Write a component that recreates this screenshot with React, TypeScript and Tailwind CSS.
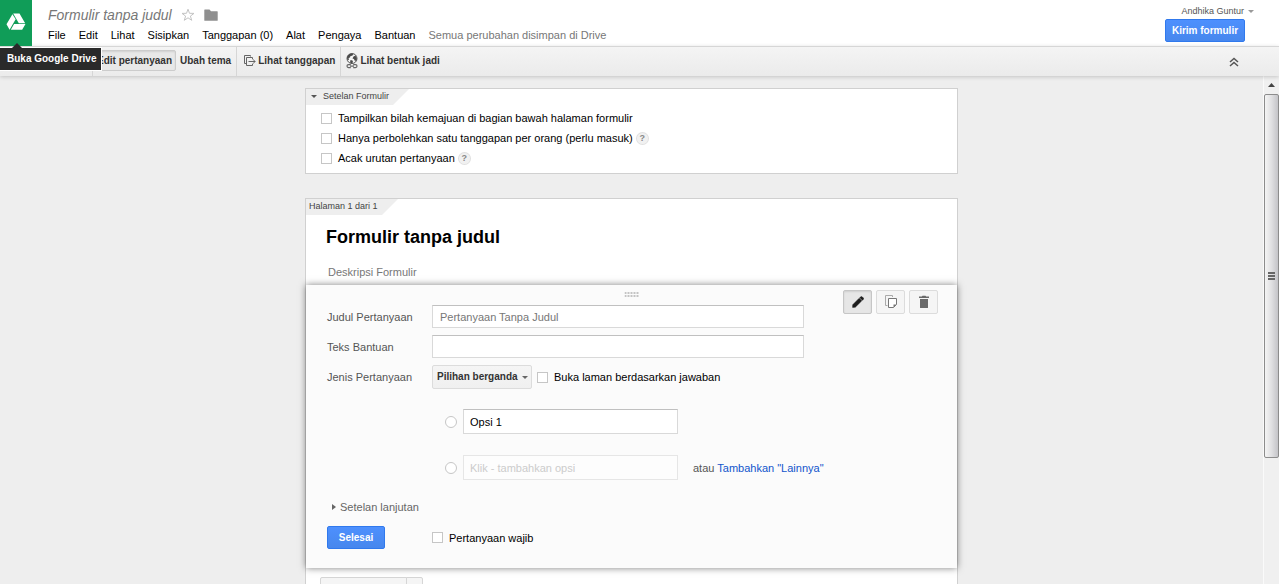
import type { ReactNode } from "react";
import clsx from "clsx";

const MENUS = ["File", "Edit", "Lihat", "Sisipkan", "Tanggapan (0)", "Alat", "Pengaya", "Bantuan"];

const SETTINGS = [
  { id: "progress", label: "Tampilkan bilah kemajuan di bagian bawah halaman formulir", help: false },
  { id: "single", label: "Hanya perbolehkan satu tanggapan per orang (perlu masuk)", help: true },
  { id: "shuffle", label: "Acak urutan pertanyaan", help: true },
];

function DriveLogo() {
  return (
    <svg viewBox="0 0 24 24" className="h-5 w-5 fill-white" aria-hidden>
      <path d="M7.700 2.600.6 14.800l3.700 6.600 7.300-12.600zM9.700 14.500l-3.900 6.900h13.600l4-6.900zM23 13.500 16.200 1.800H8.600l6.800 11.700z" />
    </svg>
  );
}

function StarIcon() {
  return (
    <svg viewBox="0 0 14 14" className="h-3.5 w-3.5 fill-none stroke-[#c4c4c4]" aria-hidden>
      <path d="m7 1.200 1.500 4.100 4.500.1-3.600 2.700 1.300 4.200L7 9.800l-3.700 2.500 1.300-4.200L1 5.400l4.500-.1z" />
    </svg>
  );
}

function FolderIcon() {
  return (
    <svg viewBox="0 0 14 12" className="h-3 w-3.5 fill-[#8f8f8f]" aria-hidden>
      <path d="M.8.5h4.700L7 2.200h6.200a.5.5 0 0 1 .5.5v8.600a.5.5 0 0 1-.5.5H.8a.5.5 0 0 1-.5-.5V1a.5.5 0 0 1 .5-.5z" />
    </svg>
  );
}

function ResponsesIcon() {
  return (
    <svg viewBox="0 0 12 12" className="h-3 w-3 fill-none stroke-[#666]" aria-hidden>
      <path d="M6.500 1.500v-1h-6v8h2M8.500 4V2.500h-6v8h6V9M4.500 6.500h6.500M8.800 4.200l2.300 2.300-2.300 2.300" />
    </svg>
  );
}

function LiveFormIcon() {
  return (
    <svg viewBox="0 0 12 16" className="h-4 w-3" aria-hidden>
      <circle cx="6" cy="5.500" r="5" fill="#f4f4f4" stroke="#555" />
      <path d="M1 5C1 2.500 3 .8 5 .7l2.500.6L6.200 2.800 4.500 3 4 4.500 2.500 5l.5 1.500L1.800 7.500zM7.500 3.500l2-1 1.400 3-.5 2.500-1.900-.5L8 6 6.500 5.500zM4.500 7l2 .5.5 1.500-1 1.400L4 9.500z" fill="#4a4a4a" />
      <path d="M4.800 11.600H2.500a1.500 1.500 0 0 0 0 3h2.300M7.200 11.600h2.300a1.500 1.500 0 0 1 0 3H7.200M4 13.100h4" fill="none" stroke="#666" strokeWidth="1.200" />
    </svg>
  );
}

function PencilIcon() {
  return (
    <svg viewBox="0 0 12 12" className="h-3 w-3" aria-hidden>
      <path d="M.6 11.400.7 8.800 7.200 2.200 9.800 4.800 3.300 11.200zM7.800 1.700l.7-.8a1.200 1.200 0 0 1 1.800 0l.9.9a1.200 1.200 0 0 1 0 1.800l-.8.7z" fill="#1c1c1c" stroke="#1c1c1c" strokeWidth=".5" strokeLinejoin="round" />
    </svg>
  );
}

function CopyIcon() {
  return (
    <svg viewBox="0 0 12 14" className="h-3.5 w-3 fill-none" aria-hidden>
      <path d="M2.500 10.500h-2v-10h7v1.500" stroke="#aaa" />
      <path d="M3.500 3.500h8v6l-3 3h-5z" fill="#fff" stroke="#777" />
      <path d="M11.500 9.500h-3v3z" fill="#777" />
    </svg>
  );
}

function TrashIcon() {
  return (
    <svg viewBox="0 0 12 14" className="h-3.5 w-3 fill-[#6a6a6a]" aria-hidden>
      <path d="M1 1.500h2.800L4.500.8h3l.7.7H11V3H1zM2 4h8v8.500a.5.5 0 0 1-.5.5h-7a.5.5 0 0 1-.5-.5z" />
    </svg>
  );
}

function CollapseIcon() {
  return (
    <svg viewBox="0 0 10 10" className="h-2.5 w-2.5 fill-none stroke-[#555]" strokeWidth="1.500" aria-hidden>
      <path d="m1 5 4-3.500L9 5M1 9l4-3.500L9 9" />
    </svg>
  );
}

function Caret({ className }: { className?: string }) {
  return (
    <svg viewBox="0 0 6 3" className={clsx("h-[3px] w-1.5", className)} aria-hidden>
      <path d="M0 0h6L3 3z" />
    </svg>
  );
}

function Checkbox({ id, label }: { id: string; label: string }) {
  return (
    <label htmlFor={id} className="flex items-center gap-1.5 text-black">
      <input id={id} type="checkbox" className="h-[11px] w-[11px] appearance-none border border-[#c6c6c6] bg-white checked:bg-[#4d90fe]" />
      {label}
    </label>
  );
}

function ToolbarButton({ icon, active, children }: { icon?: ReactNode; active?: boolean; children: ReactNode }) {
  return (
    <button
      type="button"
      className={clsx(
        "flex h-[21px] items-center gap-0.5 rounded-xs border px-[3px] text-[10px] font-bold text-[#333]",
        active ? "border-[#ccc] bg-[#e8e8e8] shadow-[inset_0_1px_2px_rgba(0,0,0,0.1)]" : "border-transparent",
      )}
    >
      {icon}
      {children}
    </button>
  );
}

function ActionButton({ label, active, children }: { label: string; active?: boolean; children: ReactNode }) {
  return (
    <button
      type="button"
      aria-label={label}
      className={clsx(
        "flex h-6 w-[29px] items-center justify-center rounded-xs border",
        active
          ? "border-[#c6c6c6] bg-[#e6e6e6] shadow-[inset_0_1px_2px_rgba(0,0,0,0.1)]"
          : "border-[#dcdcdc] bg-[#f5f5f5]",
      )}
    >
      {children}
    </button>
  );
}

function CardTab({ children }: { children: ReactNode }) {
  return (
    <div className="flex">
      <div className="flex h-4 items-center gap-1.5 bg-[#eee] pr-1 pb-0.5 pl-[3px] text-[9px] text-[#444]">{children}</div>
      <svg viewBox="0 0 16 16" className="h-4 w-4 fill-[#eee]" aria-hidden>
        <path d="M0 0h16L0 16z" />
      </svg>
    </div>
  );
}

function Header() {
  return (
    <header className="flex h-[46px] shrink-0 bg-white">
      <div className="relative z-20 flex w-8 justify-center bg-[#109d58] pt-3">
        <a href="#drive" aria-label="Buka Google Drive">
          <DriveLogo />
        </a>
        <div role="tooltip" className="absolute top-[47px] left-0 flex h-6 w-[102px] items-center border border-l-0 border-white bg-[#2a2a2a] pl-[7px] text-[10px] font-bold whitespace-nowrap text-white">
          <svg viewBox="0 0 10 5" className="absolute -top-[5px] left-3 h-[5px] w-2.5 fill-[#2a2a2a]" aria-hidden>
            <path d="M0 5 5 0l5 5z" />
          </svg>
          Buka Google Drive
        </div>
      </div>
      <div className="flex flex-1 flex-col pl-4">
        <div className="flex h-7 items-center gap-[9px] pt-0.5">
          <h1 className="text-[14px] text-[#777] italic">Formulir tanpa judul</h1>
          <button type="button" aria-label="Bintangi">
            <StarIcon />
          </button>
          <button type="button" aria-label="Pindahkan ke folder">
            <FolderIcon />
          </button>
        </div>
        <nav className="flex h-3.5 items-center gap-[13px] text-black">
          {MENUS.map((menu) => (
            <button key={menu} type="button">
              {menu}
            </button>
          ))}
          <span className="text-[#777]">Semua perubahan disimpan di Drive</span>
        </nav>
      </div>
      <div className="flex flex-col items-end pt-1 pr-[25px]">
        <button type="button" className="flex h-3.5 items-center gap-1 text-[9px] text-[#555]">
          Andhika Guntur
          <Caret className="fill-[#999]" />
        </button>
        <button type="button" className="mt-px mr-[9px] h-[23px] w-20 rounded-xs border border-[#3079ed] bg-linear-to-b from-[#4d90fe] to-[#4787ed] text-[10px] font-bold text-white">
          Kirim formulir
        </button>
      </div>
    </header>
  );
}

function Toolbar() {
  return (
    <div className="relative z-10 flex h-[30px] shrink-0 items-stretch border-t border-[#d6d6d6] bg-linear-to-b from-[#f4f4f4] to-[#ebebeb] pr-10 shadow-[0_1px_4px_rgba(0,0,0,0.18)]">
      <div className="w-[93px] border-r border-[#d6d6d6]" />
      <div className="flex items-start border-r border-[#d6d6d6] pt-[3px] pr-px">
        <ToolbarButton active>Edit pertanyaan</ToolbarButton>
        <ToolbarButton>Ubah tema</ToolbarButton>
      </div>
      <div className="flex items-start border-r border-[#d6d6d6] pt-[3px] pr-px pl-[3px]">
        <ToolbarButton icon={<ResponsesIcon />}>Lihat tanggapan</ToolbarButton>
      </div>
      <div className="flex items-start pt-[3px] pl-px">
        <ToolbarButton icon={<LiveFormIcon />}>Lihat bentuk jadi</ToolbarButton>
      </div>
      <button type="button" aria-label="Ciutkan" className="ml-auto">
        <CollapseIcon />
      </button>
    </div>
  );
}

function SettingsCard() {
  return (
    <section className="border border-[#d0d0d0] bg-white pb-[5px]">
      <CardTab>
        <Caret className="ml-0.5 fill-[#555]" />
        Setelan Formulir
      </CardTab>
      <ul className="flex flex-col pt-[3px] pl-[15px]">
        {SETTINGS.map(({ id, label, help }) => (
          <li key={id} className="flex h-5 items-center gap-1">
            <Checkbox id={id} label={label} />
            {help && (
              <button type="button" aria-label="Bantuan" className="h-[11px] w-[11px] rounded-full bg-[#f1f1f1] text-[9px] leading-[11px] font-bold text-[#888] ring-1 ring-[#e0e0e0]">
                ?
              </button>
            )}
          </li>
        ))}
      </ul>
    </section>
  );
}

const FIELD = "border border-[#d9d9d9] border-t-[#c0c0c0] bg-white text-black outline-none";

function QuestionEditor() {
  return (
    <div className="relative flex justify-between bg-[#fbfbfb] pr-[19px] pb-[19px] pl-[21px] shadow-[0_0_7px_rgba(0,0,0,0.5)]">
      <svg viewBox="0 0 15 5" className="absolute top-[7px] left-1/2 h-[5px] w-[15px] -translate-x-1/2 fill-none stroke-[#c4c4c4]" aria-hidden>
        <path d="M0 1h15M0 4h15" strokeWidth="2" strokeDasharray="2 1" />
      </svg>
      <form className="pt-5 text-[#555]">
        <div className="grid grid-cols-[105px_1fr] items-center gap-y-[7px]">
          <label htmlFor="question-title">Judul Pertanyaan</label>
          <input id="question-title" placeholder="Pertanyaan Tanpa Judul" className={clsx(FIELD, "h-[23px] w-[372px] px-[7px] placeholder:text-[#777]")} />
          <label htmlFor="question-help">Teks Bantuan</label>
          <input id="question-help" className={clsx(FIELD, "h-[23px] w-[372px] px-[7px]")} />
          <label htmlFor="question-type">Jenis Pertanyaan</label>
          <div className="flex items-center gap-[5px]">
            <div className="relative">
              <select id="question-type" className="h-6 w-[100px] appearance-none rounded-xs border border-[#dcdcdc] bg-linear-to-b from-[#f5f5f5] to-[#f0f0f0] pl-1 text-[10px] font-bold text-[#333]">
                <option>Pilihan berganda</option>
              </select>
              <Caret className="pointer-events-none absolute top-[11px] right-1 fill-[#666]" />
            </div>
            <Checkbox id="branching" label="Buka laman berdasarkan jawaban" />
          </div>
        </div>

        <div className="flex flex-col gap-[21px] pt-5 pl-[118px]">
          <div className="flex items-center gap-1.5">
            <input type="radio" name="option" aria-label="Opsi 1" disabled className="h-3 w-3 appearance-none rounded-full border border-[#c6c6c6] bg-white" />
            <input aria-label="Teks opsi 1" defaultValue="Opsi 1" className={clsx(FIELD, "h-[25px] w-[215px] px-1.5")} />
          </div>
          <div className="flex items-center gap-1.5">
            <input type="radio" name="option" aria-label="Opsi baru" disabled className="h-3 w-3 appearance-none rounded-full border border-[#c6c6c6] bg-white" />
            <input aria-label="Tambahkan opsi" placeholder="Klik - tambahkan opsi" className="h-[25px] w-[215px] border border-[#e6e6e6] bg-[#fdfdfd] px-1.5 outline-none placeholder:text-[#ccc]" />
            <span className="pl-[9px]">
              atau{" "}
              <a href="#lainnya" className="text-[#1155cc]">
                Tambahkan "Lainnya"
              </a>
            </span>
          </div>
        </div>

        <button type="button" className="mt-5 flex h-3.5 items-center gap-1 pl-[5px] text-[#666]">
          <svg viewBox="0 0 4 6" className="h-1.5 w-1 fill-[#666]" aria-hidden>
            <path d="M0 0v6l4-3z" />
          </svg>
          Setelan lanjutan
        </button>

        <div className="grid grid-cols-[105px_1fr] items-center pt-3">
          <button type="button" className="h-[23px] w-[58px] rounded-xs border border-[#3079ed] bg-linear-to-b from-[#4d90fe] to-[#4787ed] text-[10px] font-bold text-white">
            Selesai
          </button>
          <Checkbox id="required" label="Pertanyaan wajib" />
        </div>
      </form>
      <div className="flex gap-1 pt-[5px]">
        <ActionButton label="Edit" active>
          <PencilIcon />
        </ActionButton>
        <ActionButton label="Duplikat">
          <CopyIcon />
        </ActionButton>
        <ActionButton label="Hapus">
          <TrashIcon />
        </ActionButton>
      </div>
    </div>
  );
}

function PageCard() {
  return (
    <section className="border border-[#d0d0d0] bg-white pb-8">
      <CardTab>Halaman 1 dari 1</CardTab>
      <h2 className="pt-2 pl-5 text-lg font-bold text-black">Formulir tanpa judul</h2>
      <p className="pt-3.5 pb-1.5 pl-[22px] text-[#777]">Deskripsi Formulir</p>
      <QuestionEditor />
      <div className="flex pt-[9px] pl-3.5">
        <button type="button" aria-label="Tambahkan item" className="h-6 w-[87px] rounded-l-xs border border-[#d6d6d6] bg-[#f5f5f5]" />
        <button type="button" aria-label="Pilih jenis item" className="-ml-px h-6 w-[17px] rounded-r-xs border border-[#d6d6d6] bg-[#f5f5f5]" />
      </div>
    </section>
  );
}

function Scrollbar() {
  return (
    <div className="flex w-4 shrink-0 flex-col border-l border-[#fafafa] bg-[#f0f0f0]" aria-hidden>
      <div className="flex h-[18px] items-center justify-center">
        <svg viewBox="0 0 7 4" className="h-1 w-[7px] fill-[#444]">
          <path d="M0 4h7L3.500 0z" />
        </svg>
      </div>
      <div className="flex h-[71.6%] flex-col items-center justify-center gap-px rounded-xs border border-[#8c8c8c] bg-linear-to-r from-[#f4f4f4] via-[#e0e0e2] to-[#c4c4c8]">
        <span className="h-0.5 w-[7px] bg-[#666]" />
        <span className="h-0.5 w-[7px] bg-[#666]" />
        <span className="h-0.5 w-[7px] bg-[#666]" />
      </div>
    </div>
  );
}

export default function App() {
  return (
    <div className="flex h-screen flex-col overflow-hidden bg-[#eee] font-['Liberation_Sans',Arial,sans-serif] text-[11px] leading-[14px]">
      <Header />
      <Toolbar />
      <div className="flex min-h-0 flex-1">
        <main className="min-w-0 flex-1 overflow-hidden">
          <div className="mx-auto flex max-w-[653px] flex-col gap-6 pt-3">
            <SettingsCard />
            <PageCard />
          </div>
        </main>
        <Scrollbar />
      </div>
    </div>
  );
}
